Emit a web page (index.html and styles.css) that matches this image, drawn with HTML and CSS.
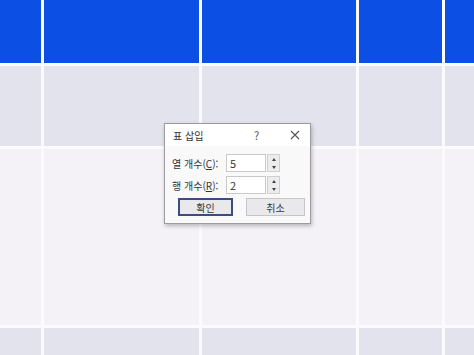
FILE: index.html
```html
<!DOCTYPE html>
<html lang="ko">

<head>
    <meta charset="UTF-8">
    <meta name="viewport" content="width=device-width, initial-scale=1.0">
    <title>표 삽입</title>
    <link rel="stylesheet" href="styles.css">
</head>

<body>
    <div class="sheet">
        <div class="cell head"></div>
        <div class="cell head"></div>
        <div class="cell head"></div>
        <div class="cell head"></div>
        <div class="cell head"></div>

        <div class="cell band"></div>
        <div class="cell band"></div>
        <div class="cell band"></div>
        <div class="cell band"></div>
        <div class="cell band"></div>

        <div class="cell plain"></div>
        <div class="cell plain"></div>
        <div class="cell plain"></div>
        <div class="cell plain"></div>
        <div class="cell plain"></div>

        <div class="cell band"></div>
        <div class="cell band"></div>
        <div class="cell band"></div>
        <div class="cell band"></div>
        <div class="cell band"></div>
    </div>

    <div class="dialog">
        <div class="title-bar">
            <span class="title">표 삽입</span>
            <span class="help">?</span>
            <svg class="close" width="10" height="10" viewBox="0 0 10 10">
                <path d="M1 1 L9 9 M9 1 L1 9" stroke="#555" stroke-width="1.1" fill="none" />
            </svg>
        </div>

        <div class="dialog-body">
            <div class="field">
                <label>열 개수(<u>C</u>):</label>
                <div class="num-input">
                    <input type="text" value="5">
                    <div class="spin">
                        <span class="arrow up"></span>
                        <span class="arrow down"></span>
                    </div>
                </div>
            </div>

            <div class="field">
                <label>행 개수(<u>R</u>):</label>
                <div class="num-input">
                    <input type="text" value="2">
                    <div class="spin">
                        <span class="arrow up"></span>
                        <span class="arrow down"></span>
                    </div>
                </div>
            </div>

            <div class="buttons">
                <button class="btn ok">확인</button>
                <button class="btn cancel">취소</button>
            </div>
        </div>
    </div>
</body>

</html>
```

FILE: styles.css
```css
* {
    box-sizing: border-box;
}

body {
    margin: 0;
    width: 474px;
    height: 355px;
    overflow: hidden;
    font-family: "Noto Sans CJK KR", "Noto Sans", sans-serif;
    color: #333;
}

/* 배경 표 */
.sheet {
    display: grid;
    grid-template-columns: 41px 155px 154px 83px 1fr;
    grid-template-rows: 63px 80px 176px 1fr;
    gap: 3px;
    width: 474px;
    height: 355px;
    background: #fbfbfd;
}

.head {
    background: #0b4fe4;
}

.band {
    background: #e3e3ee;
}

.plain {
    background: #f4f2f7;
}

/* 대화 상자 */
.dialog {
    position: absolute;
    left: 164px;
    top: 123px;
    width: 147px;
    height: 101px;
    background: #f9f9fa;
    border: 1px solid #9c9ca0;
    box-shadow: 1px 2px 4px rgba(0, 0, 0, 0.25);
}

.title-bar {
    display: flex;
    align-items: center;
    height: 22px;
    padding-left: 8px;
    background: #fff;
    font-size: 10px;
}

.title {
    width: 81px;
}

.help {
    width: 36px;
    font-size: 11px;
    color: #555;
}

.close {
    display: block;
}

.dialog-body {
    padding: 8px 0 0 7px;
    font-size: 10px;
}

.field {
    display: flex;
    align-items: center;
    height: 18px;
    margin-bottom: 4px;
}

.field label {
    width: 54px;
}

.field u {
    text-underline-offset: 1px;
}

.num-input {
    display: flex;
    height: 18px;
}

.num-input input {
    width: 40px;
    height: 18px;
    padding: 0 0 0 3px;
    border: 1px solid #c9c9cc;
    background: #fff;
    font: inherit;
    font-size: 11px;
    color: #333;
}

.spin {
    display: flex;
    flex-direction: column;
    justify-content: space-around;
    align-items: center;
    width: 13px;
    margin-left: 1px;
    background: #ececee;
    border: 1px solid #d0d0d3;
}

.arrow {
    width: 0;
    height: 0;
    border-left: 2.5px solid transparent;
    border-right: 2.5px solid transparent;
}

.arrow.up {
    border-bottom: 3px solid #444;
}

.arrow.down {
    border-top: 3px solid #444;
}

.buttons {
    display: flex;
    gap: 13px;
    margin-top: 3px;
    padding-left: 6px;
}

.btn {
    height: 18px;
    padding: 0;
    font: inherit;
    font-size: 10px;
    color: #333;
    background: #e9e9ec;
    cursor: pointer;
}

.btn.ok {
    width: 55px;
    border: 2px solid #3c4d86;
}

.btn.cancel {
    width: 59px;
    border: 1px solid #c6c6c9;
}
```
